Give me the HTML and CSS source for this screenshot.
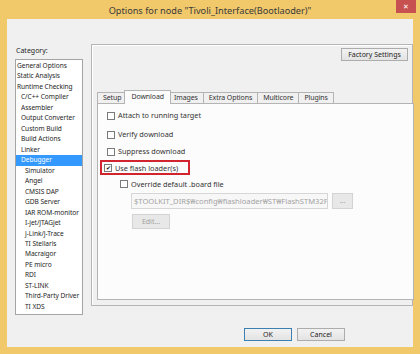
FILE: index.html
```html
<!DOCTYPE html>
<html lang="en">
<head>
  <meta charset="UTF-8" />
  <title>Options for node</title>
  <link rel="stylesheet" href="styles.css">
</head>
<body>
  <div class="titlebar">
    <span></span>
    <span class="title">Options for node "Tivoli_Interface(Bootlaoder)"</span>
    <span class="close">&#x2715;</span>
  </div>

  <div class="client">
    <div class="main">
      <div class="category">
        <div class="cat-label">Category:</div>
        <ul class="cat-list">
          <li>General Options</li>
          <li>Static Analysis</li>
          <li>Runtime Checking</li>
          <li class="l1">C/C++ Compiler</li>
          <li class="l1">Assembler</li>
          <li class="l1">Output Converter</li>
          <li class="l1">Custom Build</li>
          <li class="l1">Build Actions</li>
          <li class="l1">Linker</li>
          <li class="l1 selected">Debugger</li>
          <li class="l2">Simulator</li>
          <li class="l2">Angel</li>
          <li class="l2">CMSIS DAP</li>
          <li class="l2">GDB Server</li>
          <li class="l2">IAR ROM-monitor</li>
          <li class="l2">I-jet/JTAGjet</li>
          <li class="l2">J-Link/J-Trace</li>
          <li class="l2">TI Stellaris</li>
          <li class="l2">Macraigor</li>
          <li class="l2">PE micro</li>
          <li class="l2">RDI</li>
          <li class="l2">ST-LINK</li>
          <li class="l2">Third-Party Driver</li>
          <li class="l2">TI XDS</li>
        </ul>
      </div>

      <div class="panel">
        <div class="panel-top">
          <button class="btn factory">Factory Settings</button>
        </div>
        <div class="tabs">
          <span class="tab">Setup</span>
          <span class="tab active">Download</span>
          <span class="tab">Images</span>
          <span class="tab">Extra Options</span>
          <span class="tab">Multicore</span>
          <span class="tab">Plugins</span>
        </div>
        <div class="tab-body">
          <label class="check attach"><span class="box"></span>Attach to running target</label>
          <label class="check verify"><span class="box"></span>Verify download</label>
          <label class="check suppress"><span class="box"></span>Suppress download</label>
          <div class="mark">
            <label class="check"><span class="box checked">&#x2714;</span>Use flash loader(s)</label>
          </div>
          <div class="sub">
            <label class="check"><span class="box"></span>Override default .board file</label>
            <div class="path-row">
              <div class="path">$TOOLKIT_DIR$₩config₩flashloader₩ST₩FlashSTM32F</div>
              <button class="btn off dots">...</button>
            </div>
            <button class="btn off edit">Edit...</button>
          </div>
        </div>
      </div>
    </div>

    <div class="footer">
      <button class="btn ok">OK</button>
      <button class="btn">Cancel</button>
    </div>
  </div>
</body>
</html>
```

FILE: styles.css
```css
html, body {
  margin: 0;
  padding: 0;
}
body {
  width: 420px;
  height: 354px;
  background: #f1c86a;
  font-family: "Noto Sans", sans-serif;
  font-size: 7px;
  color: #1e1e1e;
  overflow: hidden;
}
.titlebar {
  height: 19px;
  display: grid;
  grid-template-columns: 1fr auto 1fr;
}
.title {
  font-size: 9.2px;
  line-height: 21px;
  color: #3a3a3a;
}
.close {
  justify-self: end;
  width: 20px;
  height: 13px;
  margin-right: 4px;
  background: #c75150;
  color: #fff;
  font-size: 7px;
  line-height: 13px;
  text-align: center;
}
.client {
  margin: 0 7px;
  height: 328px;
  background: #f0f0f0;
  display: flex;
  flex-direction: column;
}
.main {
  display: flex;
  padding: 25px 0 0 8px;
}
.category {
  width: 68px;
  margin-right: 8px;
}
.cat-label {
  line-height: 10px;
  padding: 2px 0 0 1px;
}
.cat-list {
  list-style: none;
  margin: 3px 0 0;
  padding: 1px 0 0;
  height: 253px;
  border: 1px solid #a5a5a5;
  background: #fff;
  font-size: 6.6px;
  letter-spacing: -0.05px;
}
.cat-list li {
  line-height: 10.47px;
  height: 10.47px;
  padding-left: 1px;
  white-space: nowrap;
}
.cat-list li.l1 { padding-left: 5px; }
.cat-list li.l2 { padding-left: 9px; }
.cat-list li.selected {
  background: #3399ff;
  color: #fff;
}
.panel {
  width: 315px;
  height: 257px;
  border: 1px solid #b5b5b5;
  box-shadow: inset 1px 1px 0 #fff;
  padding: 3px 0 0 5px;
}
.panel-top {
  display: flex;
  justify-content: flex-end;
  height: 42px;
  align-items: flex-start;
}
.btn {
  font-family: "Noto Sans", sans-serif;
  font-size: 7px;
  color: #1e1e1e;
  border: 1px solid #acacac;
  background: linear-gradient(#f2f2f2, #e3e3e3);
  padding: 0;
  margin: 0;
  height: 13px;
  line-height: 11px;
}
.factory {
  width: 67px;
  margin-right: 4px;
}
.tabs {
  display: flex;
  align-items: flex-end;
  height: 13px;
  letter-spacing: -0.1px;
}
.tab {
  border: 1px solid #b4b4b4;
  border-bottom: none;
  height: 10px;
  line-height: 10px;
  padding: 0 5px;
  margin-left: -1px;
  background: #f0f0f0;
  color: #333;
}
.tab:first-child { margin-left: 0; }
.tab.active {
  height: 13px;
  line-height: 12px;
  background: #fcfcfc;
  margin: 0 -2px 0 -3px;
  padding: 0 6px;
  position: relative;
  z-index: 1;
  top: 1px;
}
.tab-body {
  width: 306px;
  height: 195px;
  border: 1px solid #b4b4b4;
  background: #fcfcfc;
  padding: 0 0 0 9px;
  font-size: 7.3px;
}
.check {
  display: flex;
  align-items: center;
  height: 9px;
  line-height: 9px;
  white-space: nowrap;
  color: #333;
}
.check.attach { margin-top: 7px; }
.check.verify { margin-top: 10px; }
.check.suppress { margin-top: 8px; }
.box {
  width: 6px;
  height: 6px;
  border: 1px solid #7a7a7a;
  background: #fff;
  margin-right: 3px;
  flex: none;
  font-size: 6px;
  line-height: 6px;
  text-align: center;
  color: #111;
}
.mark {
  display: inline-flex;
  margin: 3.5px 0 0 -7px;
  padding: 2px 10px 0 2px;
  border: 2.5px solid #d2242e;
}
.sub {
  margin: 5px 0 0 13px;
}
.path-row {
  display: flex;
  align-items: center;
  margin-top: 4px;
}
.path {
  width: 193px;
  height: 14px;
  line-height: 14px;
  border: 1px solid #d6d6d6;
  background: #f7f7f7;
  color: #a3a3a3;
  padding-left: 2px;
  overflow: hidden;
  white-space: nowrap;
  margin-left: 11px;
  font-size: 7.6px;
}
.btn.off {
  color: #a0a0a0;
  border-color: #d3d3d3;
  background: #e8e8e8;
}
.dots {
  width: 21px;
  height: 16px;
  margin-left: 4px;
}
.edit {
  width: 38px;
  height: 15px;
  margin: 5px 0 0 12px;
}
.footer {
  display: flex;
  justify-content: flex-end;
  gap: 5px;
  margin-top: auto;
  padding: 0 68px 6px 0;
}
.footer .btn {
  width: 48px;
}
.footer .btn.ok {
  border-color: #3c7fb1;
}
```
